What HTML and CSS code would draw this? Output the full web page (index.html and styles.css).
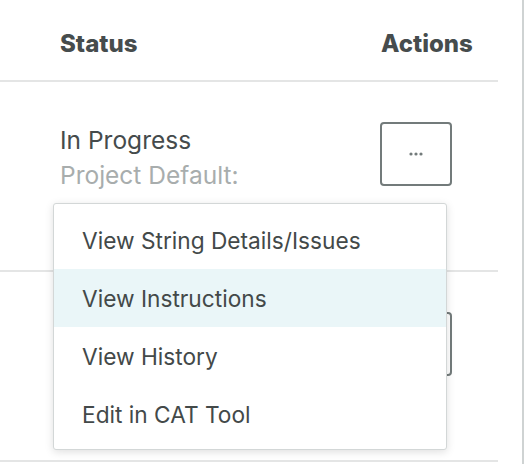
FILE: index.html
```html
<!DOCTYPE html>
<html>
<head>
<meta charset="utf-8">
<link rel="stylesheet" href="styles.css">
</head>
<body>
<div class="page">
  <div class="table">
    <div class="row head">
      <div class="cell status">Status</div>
      <div class="cell actions">Actions</div>
    </div>
    <div class="row body">
      <div class="cell status">
        <div class="state">In Progress</div>
        <div class="sub">Project Default:</div>
      </div>
      <div class="cell actions">
        <div class="anchor">
          <button class="more" type="button"><svg width="14" height="4" viewBox="0 0 14 4"><circle cx="2" cy="2" r="1.6"/><circle cx="7" cy="2" r="1.6"/><circle cx="12" cy="2" r="1.6"/></svg></button>
          <ul class="menu">
            <li>View String Details/Issues</li>
            <li class="hover">View Instructions</li>
            <li>View History</li>
            <li>Edit in CAT Tool</li>
          </ul>
        </div>
      </div>
    </div>
    <div class="row body">
      <div class="cell status"></div>
      <div class="cell actions">
        <button class="more" type="button"><svg width="14" height="4" viewBox="0 0 14 4"><circle cx="2" cy="2" r="1.6"/><circle cx="7" cy="2" r="1.6"/><circle cx="12" cy="2" r="1.6"/></svg></button>
      </div>
    </div>
  </div>
  <div class="rail"></div>
</div>
</body>
</html>
```
FILE: styles.css
```css
html, body {
  margin: 0;
  padding: 0;
  background: #ffffff;
}
body {
  font-family: Inter, "Noto Sans", sans-serif;
  color: #454b4c;
  overflow: hidden;
}
.page {
  display: flex;
  height: 464px;
  width: 526px;
}
.table {
  width: 498px;
  flex: none;
}
.rail {
  margin-left: 24px;
  width: 2px;
  background: #cfd3d3;
  height: 464px;
}
.row {
  display: flex;
  border-bottom: 2px solid #e4e5e5;
}
.head {
  box-sizing: border-box;
  height: 82px;
  font-weight: 800;
  font-size: 24px;
  line-height: 30px;
  color: #464c4d;
}
.head .cell {
  padding-top: 29px;
}
.body {
  height: 190px;
  box-sizing: border-box;
}
.cell.status {
  flex: 1;
  padding-left: 60px;
}
.cell.actions {
  width: 118px;
  flex: none;
}
.head .cell.actions {
  padding-left: 1px;
  box-sizing: border-box;
}
.body .cell.status {
  padding-top: 41px;
  font-size: 24.5px;
  line-height: 35px;
}
.state {
  color: #454b4c;
}
.sub {
  color: #a8adad;
}
.body .cell.actions {
  padding-top: 40px;
}
.anchor {
  position: relative;
  width: 72px;
}
.more {
  display: flex;
  align-items: center;
  justify-content: center;
  width: 72px;
  height: 64px;
  box-sizing: border-box;
  border: 2px solid #737b7b;
  border-radius: 4px;
  background: #ffffff;
  padding: 0;
  margin: 0;
}
.more svg {
  fill: #737b7b;
}
.menu {
  position: absolute;
  top: 81px;
  right: 5px;
  width: 394px;
  box-sizing: border-box;
  margin: 0;
  padding: 7px 0 6px;
  list-style: none;
  background: #ffffff;
  border: 1px solid #d3d7d7;
  border-radius: 3px;
  box-shadow: 0 2px 8px rgba(0, 0, 0, 0.13);
  z-index: 5;
}
.menu li {
  height: 58px;
  display: flex;
  align-items: center;
  padding-left: 28px;
  font-size: 22.7px;
  color: #434949;
}
.menu li.hover {
  background: #eaf6f8;
}
```
